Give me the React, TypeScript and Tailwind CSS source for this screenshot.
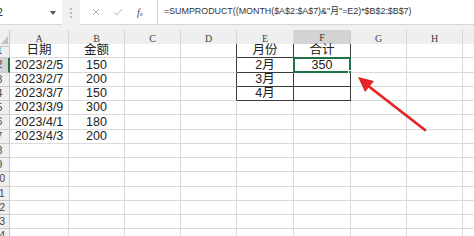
import React from "react";

const COLS = "grid grid-cols-[10px_59px_56px_56px_56px_57px_57px_56px_56px_56px]";
const LETTERS = ["A", "B", "C", "D", "E", "F", "G", "H", "I"];

type Row = Record<string, string>;

const DATA: Record<number, Row> = {
  1: { A: "日期", B: "金额", E: "月份", F: "合计" },
  2: { A: "2023/2/5", B: "150", E: "2月", F: "350" },
  3: { A: "2023/2/7", B: "200", E: "3月" },
  4: { A: "2023/3/7", B: "150", E: "4月" },
  5: { A: "2023/3/9", B: "300" },
  6: { A: "2023/4/1", B: "180" },
  7: { A: "2023/4/3", B: "200" },
};

function cellBorder(row: number, col: string) {
  const inTable = row <= 4 && (col === "E" || col === "F");
  if (row <= 4 && col === "D") return "border-r border-r-[#3a3a3a] border-b border-b-[#dadada]";
  if (inTable) return "border-r border-b border-[#3a3a3a]";
  return "border-r border-b border-[#dadada]";
}

function FormulaBar() {
  return (
    <div className="h-[30px] bg-[#f1f1f1]">
      <div className="flex h-[25px] items-stretch">
        <div className="relative flex w-[62px] items-center overflow-hidden bg-white border-b border-[#d6d6d6]">
          <span className="ml-[-9px] text-[11px] text-[#333]">F2</span>
          <svg className="absolute left-[50px] top-[11px]" width="6" height="4" viewBox="0 0 6 4">
            <path d="M0 0h6L3 4z" fill="#555" />
          </svg>
        </div>
        <div className="flex w-[18px] items-center justify-center">
          <svg width="2" height="10" viewBox="0 0 2 10">
            <rect x="0" y="0" width="2" height="2" fill="#bdbdbd" />
            <rect x="0" y="4" width="2" height="2" fill="#bdbdbd" />
            <rect x="0" y="8" width="2" height="2" fill="#bdbdbd" />
          </svg>
        </div>
        <div className="flex w-[77px] items-center bg-white border-b border-[#d6d6d6]">
          <svg className="ml-[12px]" width="8" height="8" viewBox="0 0 8 8">
            <path d="M1 1l6 6M7 1L1 7" stroke="#b5b5b5" strokeWidth="1" />
          </svg>
          <svg className="ml-[13px]" width="10" height="8" viewBox="0 0 10 8">
            <path d="M1 4.5l3 2.5 5-6" stroke="#b5b5b5" strokeWidth="1" fill="none" />
          </svg>
          <span className="ml-[14px] font-['Liberation_Serif',serif] text-[10px] italic text-[#444]">
            f<span className="text-[7px]">x</span>
          </span>
        </div>
        <div className="flex flex-1 items-center bg-white border-l border-b border-[#d6d6d6] pl-[6px]">
          <span className="font-['Liberation_Sans','Noto_Sans_CJK_SC',sans-serif] text-[8.9px] text-[#333] whitespace-nowrap">
            =SUMPRODUCT((MONTH($A$2:$A$7)&amp;"月"=E2)*$B$2:$B$7)
          </span>
        </div>
      </div>
    </div>
  );
}

function HeaderRow() {
  return (
    <div className={`${COLS} h-[14px] bg-[#efefef]`}>
      <div className="relative border-r border-b border-[#c9c9c9]">
        <svg className="absolute right-[1px] bottom-[2px]" width="7" height="8" viewBox="0 0 7 8">
          <path d="M7 0V8H0z" fill="#c2c2c2" />
        </svg>
      </div>
      {LETTERS.map((l) =>
        l === "F" ? (
          <div
            key={l}
            className="flex items-center justify-center border-r border-[#c9c9c9] border-b-2 border-b-[#217346] bg-[#d3d3d3] font-['Liberation_Serif',serif] text-[10px] text-[#333]"
          >
            {l}
          </div>
        ) : (
          <div
            key={l}
            className={`flex items-center justify-center border-r border-[#d8d8d8] border-b ${
              l === "E" ? "border-b-[#3a3a3a]" : "border-b-[#c9c9c9]"
            } font-['Liberation_Serif',serif] text-[10px] text-[#444]`}
          >
            {l}
          </div>
        )
      )}
    </div>
  );
}

function SheetRow({ n }: { n: number }) {
  const data = DATA[n] ?? {};
  return (
    <div className={`${COLS} h-[14.25px]`}>
      <div
        className={`overflow-hidden border-b border-[#c9c9c9] ${
          n === 2 ? "bg-[#d3d3d3] border-r-2 border-r-[#217346]" : "bg-[#efefef] border-r border-r-[#c9c9c9]"
        }`}
      >
        <div className="ml-[-13px] w-[25px] text-center font-['Liberation_Sans',sans-serif] text-[10px] leading-[13px] text-[#444]">
          {n}
        </div>
      </div>
      {LETTERS.map((l) => (
        <div
          key={l}
          className={`relative flex items-center justify-center bg-white ${cellBorder(n, l)} font-['Liberation_Sans','Noto_Sans_CJK_SC',sans-serif] text-[12.5px] leading-none text-[#222]`}
        >
          {data[l]}
          {n === 2 && l === "F" && (
            <div className="absolute -left-px -top-px -right-px -bottom-px border-2 border-[#217346]">
              <div className="absolute -right-[4px] -bottom-[4px] h-[5px] w-[5px] border border-white bg-[#217346]" />
            </div>
          )}
        </div>
      ))}
    </div>
  );
}

export default function App() {
  const rows = Array.from({ length: 14 }, (_, i) => i + 1);
  return (
    <div className="relative h-[236px] w-[474px] overflow-hidden bg-white">
      <FormulaBar />
      <HeaderRow />
      {rows.map((n) => (
        <SheetRow key={n} n={n} />
      ))}
      <svg className="pointer-events-none absolute left-0 top-0" width="474" height="236" viewBox="0 0 474 236">
        <line x1="425" y1="130" x2="367" y2="85" stroke="#e32626" strokeWidth="2.8" strokeLinecap="round" />
        <path d="M358 77 L374 81 L365 92 Z" fill="#e32626" />
      </svg>
    </div>
  );
}
